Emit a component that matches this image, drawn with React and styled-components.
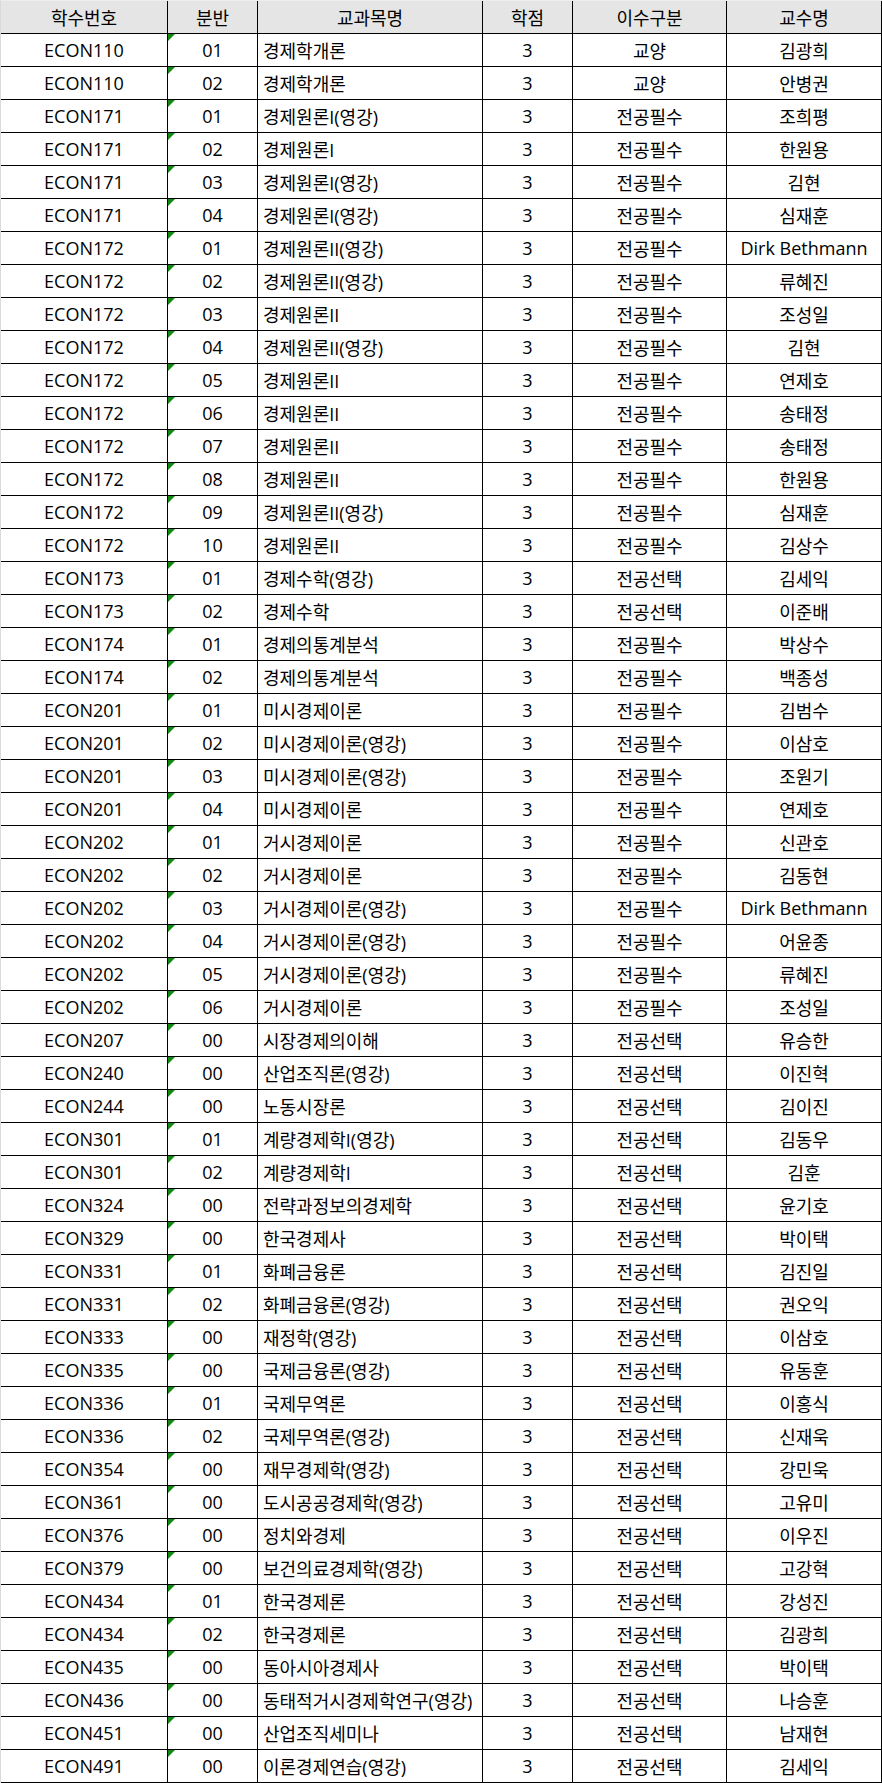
import React from 'react';
import styled, { createGlobalStyle } from 'styled-components';

const GlobalStyle = createGlobalStyle`
	html, body {
		margin: 0;
		padding: 0;
		background: #ffffff;
	}
	body {
		font-family: "Open Sans", "Noto Sans CJK KR", sans-serif;
		color: #000000;
	}
`;

const COLS = '167px 90px 225px 90px 154px 155px';

const Sheet = styled.div`
	width: 882px;
	box-sizing: border-box;
	border-left: 1px solid #dadada;
`;

const Row = styled.div`
	display: grid;
	grid-template-columns: ${COLS};
	height: ${(p) => (p.$head ? '34px' : '33px')};
	background: ${(p) => (p.$head ? '#e5e5e5' : '#ffffff')};
	border-top: ${(p) => (p.$head ? '1px solid #ededed' : 'none')};
	box-sizing: border-box;
`;

const Cell = styled.div`
	position: relative;
	display: flex;
	align-items: center;
	justify-content: ${(p) => (p.$left ? 'flex-start' : 'center')};
	padding-left: ${(p) => (p.$left ? '5px' : '0')};
	border-right: 1px solid #000000;
	border-bottom: 1px solid #000000;
	box-sizing: border-box;
	font-size: 18px;
	white-space: nowrap;
	overflow: hidden;

	${(p) =>
		p.$flag &&
		`
		&::before {
			content: '';
			position: absolute;
			top: 0;
			left: 0;
			border-style: solid;
			border-width: 7px 7px 0 0;
			border-color: #128a12 transparent transparent transparent;
		}
	`}
`;

const HEAD = ['학수번호', '분반', '교과목명', '학점', '이수구분', '교수명'];

const DATA = `ECON110|01|경제학개론|교양|김광희
ECON110|02|경제학개론|교양|안병권
ECON171|01|경제원론I(영강)|전공필수|조희평
ECON171|02|경제원론I|전공필수|한원용
ECON171|03|경제원론I(영강)|전공필수|김현
ECON171|04|경제원론I(영강)|전공필수|심재훈
ECON172|01|경제원론II(영강)|전공필수|Dirk Bethmann
ECON172|02|경제원론II(영강)|전공필수|류혜진
ECON172|03|경제원론II|전공필수|조성일
ECON172|04|경제원론II(영강)|전공필수|김현
ECON172|05|경제원론II|전공필수|연제호
ECON172|06|경제원론II|전공필수|송태정
ECON172|07|경제원론II|전공필수|송태정
ECON172|08|경제원론II|전공필수|한원용
ECON172|09|경제원론II(영강)|전공필수|심재훈
ECON172|10|경제원론II|전공필수|김상수
ECON173|01|경제수학(영강)|전공선택|김세익
ECON173|02|경제수학|전공선택|이준배
ECON174|01|경제의통계분석|전공필수|박상수
ECON174|02|경제의통계분석|전공필수|백종성
ECON201|01|미시경제이론|전공필수|김범수
ECON201|02|미시경제이론(영강)|전공필수|이삼호
ECON201|03|미시경제이론(영강)|전공필수|조원기
ECON201|04|미시경제이론|전공필수|연제호
ECON202|01|거시경제이론|전공필수|신관호
ECON202|02|거시경제이론|전공필수|김동현
ECON202|03|거시경제이론(영강)|전공필수|Dirk Bethmann
ECON202|04|거시경제이론(영강)|전공필수|어윤종
ECON202|05|거시경제이론(영강)|전공필수|류혜진
ECON202|06|거시경제이론|전공필수|조성일
ECON207|00|시장경제의이해|전공선택|유승한
ECON240|00|산업조직론(영강)|전공선택|이진혁
ECON244|00|노동시장론|전공선택|김이진
ECON301|01|계량경제학I(영강)|전공선택|김동우
ECON301|02|계량경제학I|전공선택|김훈
ECON324|00|전략과정보의경제학|전공선택|윤기호
ECON329|00|한국경제사|전공선택|박이택
ECON331|01|화폐금융론|전공선택|김진일
ECON331|02|화폐금융론(영강)|전공선택|권오익
ECON333|00|재정학(영강)|전공선택|이삼호
ECON335|00|국제금융론(영강)|전공선택|유동훈
ECON336|01|국제무역론|전공선택|이홍식
ECON336|02|국제무역론(영강)|전공선택|신재욱
ECON354|00|재무경제학(영강)|전공선택|강민욱
ECON361|00|도시공공경제학(영강)|전공선택|고유미
ECON376|00|정치와경제|전공선택|이우진
ECON379|00|보건의료경제학(영강)|전공선택|고강혁
ECON434|01|한국경제론|전공선택|강성진
ECON434|02|한국경제론|전공선택|김광희
ECON435|00|동아시아경제사|전공선택|박이택
ECON436|00|동태적거시경제학연구(영강)|전공선택|나승훈
ECON451|00|산업조직세미나|전공선택|남재현
ECON491|00|이론경제연습(영강)|전공선택|김세익`
	.split('\n')
	.map((line) => line.split('|'));

export default function App() {
	return (
		<>
			<GlobalStyle />
			<Sheet>
				<Row $head>
					{HEAD.map((h) => (
						<Cell key={h}>{h}</Cell>
					))}
				</Row>
				{DATA.map(([code, sec, name, kind, prof], i) => (
					<Row key={i}>
						<Cell>{code}</Cell>
						<Cell $flag>{sec}</Cell>
						<Cell $left>{name}</Cell>
						<Cell>3</Cell>
						<Cell>{kind}</Cell>
						<Cell>{prof}</Cell>
					</Row>
				))}
			</Sheet>
		</>
	);
}
